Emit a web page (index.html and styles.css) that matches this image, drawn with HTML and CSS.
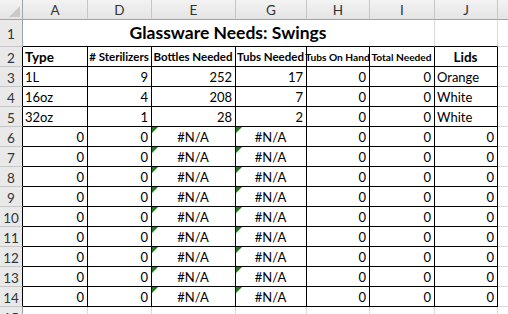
FILE: index.html
```html
<!DOCTYPE html>
<html>
<head>
<meta charset="utf-8">
<link rel="stylesheet" href="styles.css">
</head>
<body>
<div class="sheet">
  <div class="hd corner"></div>
  <div class="hd">A</div><div class="hd">D</div><div class="hd">E</div><div class="hd">G</div><div class="hd">H</div><div class="hd">I</div><div class="hd">J</div><div class="hd"></div>

  <div class="rh">1</div>
  <div class="cell title">Glassware Needs: Swings</div>
  <div class="cell under"></div>
  <div class="cell"></div>

  <div class="rh tbl">2</div>
  <div class="cell t big">Type</div>
  <div class="cell t sm ctr">#&nbsp;Sterilizers</div>
  <div class="cell t sm ctr">Bottles Needed</div>
  <div class="cell t sm ctr">Tubs Needed</div>
  <div class="cell t xs ctr">Tubs On Hand</div>
  <div class="cell t xs ctr">Total Needed</div>
  <div class="cell t big ctr">Lids</div>
  <div class="cell"></div>

  <div class="rh tbl">3</div>
  <div class="cell t">1L</div><div class="cell t num">9</div><div class="cell t num">252</div><div class="cell t num">17</div><div class="cell t num">0</div><div class="cell t num">0</div><div class="cell t">Orange</div><div class="cell"></div>

  <div class="rh tbl">4</div>
  <div class="cell t">16oz</div><div class="cell t num">4</div><div class="cell t num">208</div><div class="cell t num">7</div><div class="cell t num">0</div><div class="cell t num">0</div><div class="cell t">White</div><div class="cell"></div>

  <div class="rh tbl">5</div>
  <div class="cell t">32oz</div><div class="cell t num">1</div><div class="cell t num">28</div><div class="cell t num">2</div><div class="cell t num">0</div><div class="cell t num">0</div><div class="cell t">White</div><div class="cell"></div>

  <div class="rh tbl">6</div>
  <div class="cell t num">0</div><div class="cell t num">0</div><div class="cell t ctr err">#N/A</div><div class="cell t ctr err">#N/A</div><div class="cell t num">0</div><div class="cell t num">0</div><div class="cell t num">0</div><div class="cell"></div>

  <div class="rh tbl">7</div>
  <div class="cell t num">0</div><div class="cell t num">0</div><div class="cell t ctr err">#N/A</div><div class="cell t ctr err">#N/A</div><div class="cell t num">0</div><div class="cell t num">0</div><div class="cell t num">0</div><div class="cell"></div>

  <div class="rh tbl">8</div>
  <div class="cell t num">0</div><div class="cell t num">0</div><div class="cell t ctr err">#N/A</div><div class="cell t ctr err">#N/A</div><div class="cell t num">0</div><div class="cell t num">0</div><div class="cell t num">0</div><div class="cell"></div>

  <div class="rh tbl">9</div>
  <div class="cell t num">0</div><div class="cell t num">0</div><div class="cell t ctr err">#N/A</div><div class="cell t ctr err">#N/A</div><div class="cell t num">0</div><div class="cell t num">0</div><div class="cell t num">0</div><div class="cell"></div>

  <div class="rh tbl">10</div>
  <div class="cell t num">0</div><div class="cell t num">0</div><div class="cell t ctr err">#N/A</div><div class="cell t ctr err">#N/A</div><div class="cell t num">0</div><div class="cell t num">0</div><div class="cell t num">0</div><div class="cell"></div>

  <div class="rh tbl">11</div>
  <div class="cell t num">0</div><div class="cell t num">0</div><div class="cell t ctr err">#N/A</div><div class="cell t ctr err">#N/A</div><div class="cell t num">0</div><div class="cell t num">0</div><div class="cell t num">0</div><div class="cell"></div>

  <div class="rh tbl">12</div>
  <div class="cell t num">0</div><div class="cell t num">0</div><div class="cell t ctr err">#N/A</div><div class="cell t ctr err">#N/A</div><div class="cell t num">0</div><div class="cell t num">0</div><div class="cell t num">0</div><div class="cell"></div>

  <div class="rh tbl">13</div>
  <div class="cell t num">0</div><div class="cell t num">0</div><div class="cell t ctr err">#N/A</div><div class="cell t ctr err">#N/A</div><div class="cell t num">0</div><div class="cell t num">0</div><div class="cell t num">0</div><div class="cell"></div>

  <div class="rh tbl">14</div>
  <div class="cell t num">0</div><div class="cell t num">0</div><div class="cell t ctr err">#N/A</div><div class="cell t ctr err">#N/A</div><div class="cell t num">0</div><div class="cell t num">0</div><div class="cell t num">0</div><div class="cell"></div>

  <div class="rh">15</div>
  <div class="cell"></div><div class="cell"></div><div class="cell"></div><div class="cell"></div><div class="cell"></div><div class="cell"></div><div class="cell"></div><div class="cell"></div>
</div>
</body>
</html>
```

FILE: styles.css
```css
* { box-sizing: border-box; margin: 0; padding: 0; }
html, body { background: #fff; overflow: hidden; }
body { margin: 0; font-family: Lato, "Liberation Sans", sans-serif; color: #000; }

.sheet {
  display: grid;
  grid-template-columns: 23px 65px 64px 84px 71px 63px 65px 63px 40px;
  grid-template-rows: 20px 27px repeat(14, 20px);
  width: 538px;
}

.hd {
  background: linear-gradient(#f3f3f3, #e4e4e4);
  border-right: 1px solid #c6c6c6;
  border-bottom: 1px solid #9ea4ab;
  display: flex;
  align-items: center;
  justify-content: center;
  font-size: 13.5px;
  color: #333;
  padding-top: 1px;
}
.corner { position: relative; border-right-color: #9ea4ab; }
.corner::after {
  content: "";
  position: absolute;
  right: 2px;
  bottom: 2px;
  width: 0; height: 0;
  border-left: 11px solid transparent;
  border-bottom: 11px solid #c9c9c9;
}

.rh {
  background: #e9e9e9;
  border-right: 1px solid #9ea4ab;
  border-bottom: 1px solid #c6c6c6;
  display: flex;
  align-items: center;
  justify-content: center;
  font-size: 13.5px;
  color: #333;
  padding-top: 2px;
}
.rh.tbl { border-right-color: #000; }

.cell {
  position: relative;
  border-right: 1px solid #d9d9d9;
  border-bottom: 1px solid #d9d9d9;
  display: flex;
  align-items: flex-end;
  font-size: 13px;
  line-height: 16px;
  padding: 0 3px 1px 2px;
  white-space: nowrap;
}
.t { border-right-color: #000; border-bottom-color: #000; }
.num { justify-content: flex-end; }
.ctr { justify-content: center; padding-left: 0; padding-right: 1px; }

.title {
  grid-column: span 6;
  justify-content: center;
  font-weight: bold;
  font-size: 17.5px;
  line-height: 20px;
  padding-bottom: 3px;
  border-bottom-color: #000;
}
.under { border-bottom-color: #000; }

.big { font-weight: bold; font-size: 13.5px; }
.sm { font-weight: bold; font-size: 11.5px; }
.xs { font-weight: bold; font-size: 10.2px; overflow: visible; }

.err::before {
  content: "";
  position: absolute;
  left: 0;
  top: 0;
  width: 0; height: 0;
  border-top: 6px solid #1f7a1f;
  border-right: 6px solid transparent;
}
```
